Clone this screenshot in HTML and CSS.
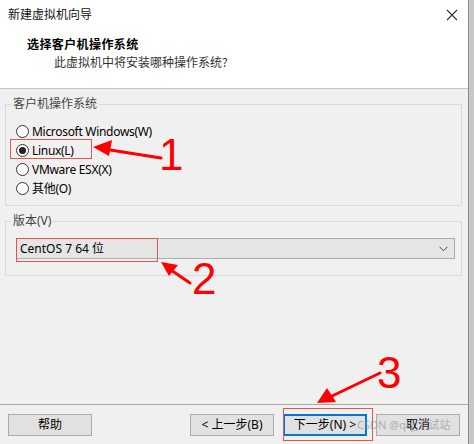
FILE: index.html
```html
<!DOCTYPE html>
<html lang="zh-CN">
<head>
<meta charset="utf-8">
<title>新建虚拟机向导</title>
<link rel="stylesheet" href="styles.css">
</head>
<body>
<div class="page">
  <div class="dialog">
    <div class="top">
      <div class="titlebar">
        <span class="title">新建虚拟机向导</span>
        <svg class="close" width="12" height="12" viewBox="0 0 12 12"><path d="M1 1 L11 11 M11 1 L1 11" stroke="#333" stroke-width="1.1" fill="none"/></svg>
      </div>
      <div class="header">
        <div class="h-title">选择客户机操作系统</div>
        <div class="h-sub">此虚拟机中将安装哪种操作系统?</div>
      </div>
    </div>
    <div class="body">
      <fieldset class="group os">
        <legend>客户机操作系统</legend>
        <div class="radio"><span class="dot"></span><span>Microsoft Windows(W)</span></div>
        <div class="radio checked"><span class="dot"></span><span>Linux(L)</span></div>
        <div class="radio"><span class="dot"></span><span>VMware ESX(X)</span></div>
        <div class="radio"><span class="dot"></span><span>其他(O)</span></div>
      </fieldset>
      <fieldset class="group ver">
        <legend>版本(V)</legend>
        <div class="select">
          <span>CentOS 7 64 位</span>
          <svg class="chev" width="9" height="6" viewBox="0 0 9 6"><path d="M0.5 0.8 L4.5 4.8 L8.5 0.8" stroke="#444" stroke-width="1" fill="none"/></svg>
        </div>
      </fieldset>
    </div>
    <div class="footer">
      <button class="btn">帮助</button>
      <div class="nav">
        <button class="btn">&lt; 上一步(B)</button>
        <button class="btn focus">下一步(N) &gt;</button>
        <button class="btn">取消</button>
      </div>
    </div>
  </div>
  <div class="backdrop"></div>
  <svg class="annot" width="474" height="444" viewBox="0 0 474 444">
    <g fill="none" stroke="#e25555" stroke-width="1">
      <rect x="10.5" y="139.5" width="81" height="19"/>
      <rect x="16.5" y="238.5" width="141" height="23"/>
      <rect x="283.5" y="408.5" width="89" height="32"/>
    </g>
    <g stroke="#f00" stroke-width="3" fill="none" stroke-linecap="round">
      <line x1="161" y1="158" x2="104" y2="149"/>
      <line x1="190" y1="283" x2="168" y2="268"/>
      <line x1="380" y1="373" x2="330" y2="397"/>
    </g>
    <g fill="#f00">
      <polygon points="93,147 112,140 109,156"/>
      <polygon points="161,262 178,265 169,276"/>
      <polygon points="317,403 327,388 336,402"/>
    </g>
    <g fill="#f00" font-family="'Liberation Sans', Arial, sans-serif" font-size="44">
      <text x="159" y="170">1</text>
      <text x="192" y="294">2</text>
      <text x="377" y="388">3</text>
    </g>
  </svg>
  <div class="watermark">CSDN @qq_测试站</div>
</div>
</body>
</html>
```
FILE: styles.css
```css
html, body {
  margin: 0;
  padding: 0;
}
body {
  width: 474px;
  height: 444px;
  overflow: hidden;
  background: #b9b9b9;
  font-family: "Noto Sans", "Noto Sans CJK SC", sans-serif;
  font-size: 12px;
  color: #000;
}
.page {
  position: relative;
  width: 474px;
  height: 444px;
  display: flex;
}
.dialog {
  width: 469px;
  height: 444px;
  display: flex;
  flex-direction: column;
  background: #f0f0f0;
  border-right: 1px solid #8a8a8a;
  box-sizing: border-box;
}
.backdrop {
  flex: 1;
  background: #c7c7c7;
}
.top {
  height: 88px;
  background: #fff;
  border-bottom: 1px solid #c4c4c4;
  flex: none;
}
.titlebar {
  height: 30px;
  display: flex;
  align-items: flex-start;
  justify-content: space-between;
  padding: 6px 10px 0 8px;
  box-sizing: border-box;
}
.title {
  line-height: 16px;
  font-family: "Noto Sans CJK SC", sans-serif;
  color: #111;
}
.close {
  margin-top: 3px;
}
.header {
  padding-left: 27px;
}
.h-title {
  margin-top: 6px;
  line-height: 16px;
  font-weight: bold;
  font-family: "Noto Sans CJK SC", sans-serif;
  letter-spacing: 0.4px;
}
.h-sub {
  margin-top: 2px;
  padding-left: 27px;
  line-height: 16px;
  font-family: "Noto Sans CJK SC", sans-serif;
  color: #333;
}
.body {
  flex: 1;
  padding: 7px 6px 0 5px;
  display: flex;
  flex-direction: column;
  gap: 7px;
}
.group {
  margin: 0;
  border: 1px solid #dadada;
  min-width: 0;
}
.group legend {
  padding: 0 2px;
  margin-left: -5px;
  line-height: 16px;
  color: #444;
  font-family: "Noto Sans", "Noto Sans CJK SC", sans-serif;
}
.os {
  padding: 10px 6px 7px 10px;
}
.radio {
  height: 19px;
  display: flex;
  align-items: center;
  gap: 3px;
  line-height: 16px;
  letter-spacing: -0.3px;
}
.dot {
  width: 13px;
  height: 13px;
  border: 1px solid #333;
  border-radius: 50%;
  background: #fff;
  box-sizing: border-box;
  display: flex;
  align-items: center;
  justify-content: center;
  flex: none;
}
.checked .dot::after {
  content: "";
  width: 7px;
  height: 7px;
  border-radius: 50%;
  background: #222;
}
.ver {
  padding: 9px 6px 16px 10px;
}
.select {
  height: 21px;
  box-sizing: border-box;
  border: 1px solid #adadad;
  background: #e5e5e5;
  display: flex;
  align-items: center;
  justify-content: space-between;
  padding: 0 6px 0 3px;
  line-height: 16px;
}
.footer {
  flex: none;
  height: 40px;
  box-sizing: border-box;
  border-top: 1px solid #a9a9a9;
  padding: 9px 8px 0 8px;
  display: flex;
  justify-content: space-between;
  align-items: flex-start;
}
.nav {
  display: flex;
  gap: 9px;
}
.btn {
  width: 84px;
  height: 22px;
  margin: 0;
  padding: 0;
  border: 1px solid #adadad;
  background: #e1e1e1;
  font-family: "Noto Sans", "Noto Sans CJK SC", sans-serif;
  font-size: 12px;
  color: #000;
  line-height: 16px;
}
.btn.focus {
  border-color: #0078d7;
  box-shadow: inset 0 0 0 1px #0078d7;
}
.annot {
  position: absolute;
  left: 0;
  top: 0;
  pointer-events: none;
}
.watermark {
  position: absolute;
  left: 357px;
  top: 418px;
  font-family: "Noto Sans", "Noto Sans CJK SC", sans-serif;
  font-size: 11px;
  color: rgba(150, 150, 150, 0.7);
  line-height: 14px;
  pointer-events: none;
}
```
